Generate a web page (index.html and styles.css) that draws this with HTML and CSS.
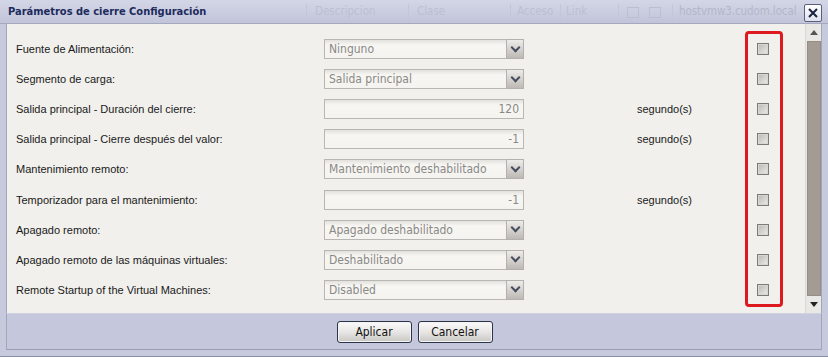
FILE: index.html
```html
<!DOCTYPE html>
<html>
<head>
<meta charset="utf-8">
<link rel="stylesheet" href="styles.css">
</head>
<body>
<div class="window">
  <div class="titlebar">
    <div class="title">Parámetros de cierre Configuración</div>
    <div class="ghosts">
      <span class="g g1">Descripcion</span>
      <span class="g g2">Clase</span>
      <span class="g g3">Acceso</span>
      <span class="g g4">Link</span>
      <span class="g g5"><i class="gi"></i><i class="gi"></i></span>
      <span class="g g6">hostvmw3.cudom.local</span>
    </div>
    <div class="close">
      <svg width="12" height="12" viewBox="0 0 12 12"><path d="M2 2 L10 10 M10 2 L2 10" stroke="#1a2440" stroke-width="2" fill="none"/></svg>
    </div>
  </div>
  <div class="main">
    <div class="content">
      <div class="row">
        <div class="label">Fuente de Alimentación:</div>
        <div class="field select"><span class="val">Ninguno</span><span class="arrow"></span></div>
        <div class="unit"></div>
        <div class="cb"></div>
      </div>
      <div class="row">
        <div class="label">Segmento de carga:</div>
        <div class="field select"><span class="val">Salida principal</span><span class="arrow"></span></div>
        <div class="unit"></div>
        <div class="cb"></div>
      </div>
      <div class="row">
        <div class="label">Salida principal - Duración del cierre:</div>
        <div class="field text"><span class="val">120</span></div>
        <div class="unit">segundo(s)</div>
        <div class="cb"></div>
      </div>
      <div class="row">
        <div class="label">Salida principal - Cierre después del valor:</div>
        <div class="field text"><span class="val">-1</span></div>
        <div class="unit">segundo(s)</div>
        <div class="cb"></div>
      </div>
      <div class="row">
        <div class="label">Mantenimiento remoto:</div>
        <div class="field select"><span class="val">Mantenimiento deshabilitado</span><span class="arrow"></span></div>
        <div class="unit"></div>
        <div class="cb"></div>
      </div>
      <div class="row">
        <div class="label">Temporizador para el mantenimiento:</div>
        <div class="field text"><span class="val">-1</span></div>
        <div class="unit">segundo(s)</div>
        <div class="cb"></div>
      </div>
      <div class="row">
        <div class="label">Apagado remoto:</div>
        <div class="field select"><span class="val">Apagado deshabilitado</span><span class="arrow"></span></div>
        <div class="unit"></div>
        <div class="cb"></div>
      </div>
      <div class="row">
        <div class="label">Apagado remoto de las máquinas virtuales:</div>
        <div class="field select"><span class="val">Deshabilitado</span><span class="arrow"></span></div>
        <div class="unit"></div>
        <div class="cb"></div>
      </div>
      <div class="row">
        <div class="label">Remote Startup of the Virtual Machines:</div>
        <div class="field select"><span class="val">Disabled</span><span class="arrow"></span></div>
        <div class="unit"></div>
        <div class="cb"></div>
      </div>
      <div class="highlight"></div>
    </div>
    <div class="scrollbar">
      <div class="sb-up"></div>
      <div class="sb-thumb"></div>
      <div class="sb-down"></div>
    </div>
  </div>
  <div class="footer">
    <button class="btn">Aplicar</button>
    <button class="btn">Cancelar</button>
  </div>
</div>
</body>
</html>
```
FILE: styles.css
```css
* { box-sizing: border-box; }
html, body { margin: 0; padding: 0; }
body { width: 828px; height: 357px; overflow: hidden; background: #9fa3b8; }

.window {
  width: 828px; height: 357px;
  background: #c7cadd;
  display: flex; flex-direction: column;
  padding: 0 6px 6px 6px;
  border-bottom: 1px solid #8a8ea4;
}

.titlebar {
  height: 24px;
  margin: 0 -6px;
  padding: 0 6px 0 8px;
  display: flex; align-items: center;
  background: linear-gradient(#d3d6e6, #c2c5da);
  border-bottom: 1px solid #a5a9bf;
  position: relative;
}
.title {
  font-family: "DejaVu Sans Condensed", "Liberation Sans", sans-serif;
  font-weight: bold; font-size: 11px; color: #1d2b5c;
  white-space: nowrap;
  position: relative; z-index: 1;
}
.ghosts {
  position: absolute; left: 0; top: 0; height: 23px; width: 800px;
  font-family: "DejaVu Sans Condensed", "Liberation Sans", sans-serif;
  font-size: 11.5px; color: #bcbfd0;
}
.g { position: absolute; top: 4px; border-left: 1px solid #c3c6d7; padding-left: 8px; height: 18px; white-space: nowrap; }
.g1 { left: 306px; }
.g2 { left: 408px; }
.g3 { left: 510px; padding-left: 6px; }
.g4 { left: 560px; padding-left: 5px; }
.g5 { left: 618px; display: flex; gap: 10px; padding-top: 3px; }
.gi { display: block; width: 12px; height: 11px; border: 1px solid #bcbfd0; }
.g6 { left: 672px; padding-left: 6px; font-size: 11.5px; letter-spacing: -0.1px; color: #b3b6c8; }

.close {
  position: absolute; right: 6px; top: 4px;
  width: 18px; height: 18px;
  border: 1px solid #5b6079; border-radius: 2px;
  background: linear-gradient(#ffffff, #dfe2ee);
  display: flex; align-items: center; justify-content: center;
}

.main {
  flex: none; height: 289px;
  display: flex;
  border-left: 1px solid #a2a6bc;
  border-right: 1px solid #a2a6bc;
}
.content {
  flex: 1;
  background: #f1f0ec;
  padding: 10px 0 0 9px;
  position: relative;
}
.row {
  height: 30.1px;
  display: grid;
  grid-template-columns: 308px 200px 113px 120px 12px;
  align-items: center;
}
.label {
  font-family: "Liberation Sans", Arial, sans-serif;
  font-size: 11px; color: #1a1a1a;
}
.field {
  height: 20px;
  border: 1px solid #b9b7b3;
  background: linear-gradient(#e2e1dd, #f7f6f3 5px, #f4f3f0);
  display: flex; align-items: center;
  font-family: "DejaVu Sans Condensed", "Liberation Sans", sans-serif;
  font-size: 12px; color: #8a8986;
}
.field .val { flex: 1; padding: 0 4px; white-space: nowrap; }
.field.text .val { text-align: right; padding-right: 4px; }
.arrow {
  width: 18px; height: 20px; margin: -1px -1px -1px 0;
  border: 1px solid #b3b1ad;
  background: linear-gradient(#eeece9, #bdb9b4);
  display: flex; align-items: center; justify-content: center;
}
.arrow::after {
  content: ""; display: block;
  width: 5px; height: 5px; margin-top: -4px;
  border-right: 2px solid #474d60; border-bottom: 2px solid #474d60;
  transform: rotate(45deg);
}
.unit {
  grid-column: 4;
  font-family: "Liberation Sans", Arial, sans-serif;
  font-size: 11px; color: #1a1a1a;
}
.cb {
  grid-column: 5;
  width: 12px; height: 12px;
  border: 1px solid #7d7b78;
  background: linear-gradient(135deg, #b9b7b4, #eeedea);
  box-shadow: inset 0 0 0 1px #d8d6d2;
}
.highlight {
  position: absolute; left: 738px; top: 7px;
  width: 38px; height: 276px;
  border: 3px solid #dd1a1f; border-radius: 4px;
}

.scrollbar {
  width: 16px; flex: none;
  background: #e9e8e5;
  display: flex; flex-direction: column; align-items: center;
  padding: 2px 1px;
  border-left: 1px solid #d9d8d4;
}
.sb-up, .sb-down { width: 14px; height: 12px; position: relative; }
.sb-up::after, .sb-down::after {
  content: ""; position: absolute; left: 3px; width: 0; height: 0;
  border-left: 4px solid transparent; border-right: 4px solid transparent;
}
.sb-up::after { top: 4px; border-bottom: 5px solid #555; }
.sb-down::after { top: 3px; border-top: 5px solid #222; }
.sb-thumb {
  flex: 1; width: 14px; margin: 3px 0;
  background: #a39b94;
  border: 1px solid #958d86;
}

.footer {
  flex: 1;
  display: flex; justify-content: center; align-items: center; gap: 6px;
  padding-left: 1px;
  background: #c5c8dc;
  border-left: 1px solid #a2a6bc;
  border-right: 1px solid #a2a6bc;
  border-top: 1px solid #d0d2e0;
  border-bottom: 1px solid #9a9eb5;
}
.btn {
  width: 75px; height: 22px;
  border: 1px solid #2c3448; border-radius: 3px;
  background: linear-gradient(#fbfbfb, #e7e6e4 50%, #c9c7c4);
  font-family: "DejaVu Sans Condensed", "Liberation Sans", sans-serif;
  font-size: 12px; color: #111;
  padding: 0;
  box-shadow: inset 0 0 0 1px #f4f4f4;
}
```
